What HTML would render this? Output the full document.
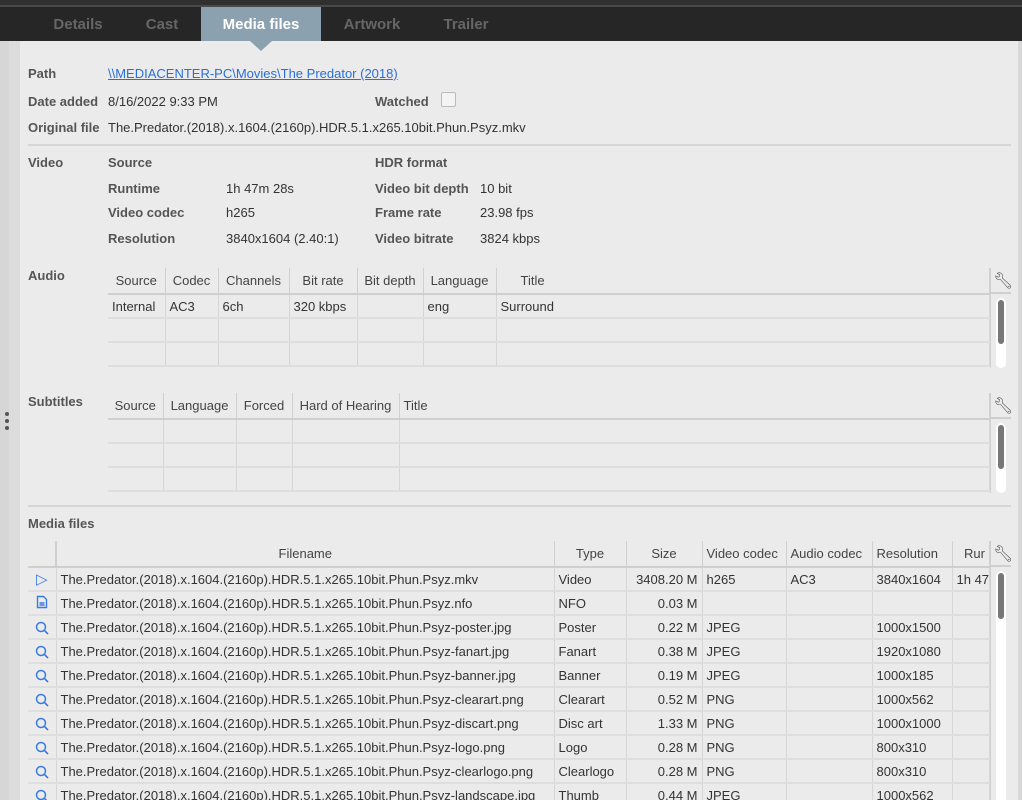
<!DOCTYPE html>
<html><head><meta charset="utf-8"><style>
*{margin:0;padding:0;box-sizing:border-box}
html{width:1022px;height:800px;overflow:hidden}
body{width:1022px;height:800px;overflow:hidden;background:#ebebeb;font-family:"Liberation Sans",Arial,sans-serif;font-size:13px;color:#333;position:relative}
.a{position:absolute;white-space:nowrap}
.lb{font-weight:bold;color:#555}
.top{position:absolute;left:0;top:0;width:1022px;height:41px;background:#262626}
.top:before{content:"";position:absolute;left:0;top:0;width:1022px;height:5px;background:#303030;border-bottom:2px solid #4a4a4a}
.tab{position:absolute;top:7px;height:34px;line-height:36px;font-size:15px;font-weight:bold;color:#666;text-align:center}
.sep{position:absolute;left:28px;width:983px;height:2px;background:#d6d6d6}
table{border-collapse:collapse;table-layout:fixed;position:absolute}
td,th{height:24px;border-right:1px solid #d6d6d6;border-bottom:2px solid #dedede;font-weight:normal;padding:0 4px;white-space:nowrap;overflow:hidden;color:#333}
th{border-bottom:2px solid #cfcfcf;border-right:1px solid #d0d0d0;height:26px;color:#444}
.sb{position:absolute;width:10px;background:#fff;border-radius:5px}
.sb div{background:#777;border-radius:4px;width:6px;margin:2px}
</style></head><body>
<div class="a" style="left:0;top:0;width:9px;height:800px;background:#d6d6d6"></div>
<div class="a" style="left:9px;top:0;width:11px;height:800px;background:#dcdcdc"></div>
<div class="a" style="left:5px;top:412px;width:4px;height:4px;border-radius:2px;background:#555;box-shadow:0 7px #555,0 14px #555"></div>
<div class="a" style="left:1018px;top:0;width:4px;height:800px;background:#d8d8d8"></div>
<div class="top"></div>
<div class="tab" style="left:38px;width:80px">Details</div>
<div class="tab" style="left:128px;width:68px">Cast</div>
<div class="tab" style="left:201px;width:120px;background:#8ca1af;color:#fff">Media files</div>
<div class="a" style="left:250px;top:41px;width:0;height:0;border-left:11px solid transparent;border-right:11px solid transparent;border-top:10px solid #8ca1af"></div>
<div class="tab" style="left:330px;width:84px">Artwork</div>
<div class="tab" style="left:430px;width:72px">Trailer</div>

<div class="a lb" style="left:28px;top:66px">Path</div>
<div class="a" style="left:108px;top:66px;color:#2a6fd6;text-decoration:underline">\\MEDIACENTER-PC\Movies\The Predator (2018)</div>
<div class="a lb" style="left:28px;top:94px">Date added</div>
<div class="a" style="left:108px;top:94px">8/16/2022 9:33 PM</div>
<div class="a lb" style="left:375px;top:94px">Watched</div>
<div class="a" style="left:441px;top:92px;width:15px;height:15px;border:1px solid #bbb;border-radius:2px;background:#f4f4f4"></div>
<div class="a lb" style="left:28px;top:120px">Original file</div>
<div class="a" style="left:108px;top:120px">The.Predator.(2018).x.1604.(2160p).HDR.5.1.x265.10bit.Phun.Psyz.mkv</div>
<div class="sep" style="top:144px"></div>

<div class="a lb" style="left:28px;top:155px">Video</div>
<div class="a lb" style="left:108px;top:155px">Source</div>
<div class="a lb" style="left:108px;top:181px">Runtime</div><div class="a" style="left:226px;top:181px">1h 47m 28s</div>
<div class="a lb" style="left:108px;top:205px">Video codec</div><div class="a" style="left:226px;top:205px">h265</div>
<div class="a lb" style="left:108px;top:231px">Resolution</div><div class="a" style="left:226px;top:231px">3840x1604 (2.40:1)</div>
<div class="a lb" style="left:375px;top:155px">HDR format</div>
<div class="a lb" style="left:375px;top:181px">Video bit depth</div><div class="a" style="left:480px;top:181px">10 bit</div>
<div class="a lb" style="left:375px;top:205px">Frame rate</div><div class="a" style="left:480px;top:205px">23.98 fps</div>
<div class="a lb" style="left:375px;top:231px">Video bitrate</div><div class="a" style="left:480px;top:231px">3824 kbps</div>

<div class="a lb" style="left:28px;top:268px">Audio</div>
<table style="left:108px;top:268px;width:882px">
<colgroup><col style="width:57px"><col style="width:53px"><col style="width:71px"><col style="width:68px"><col style="width:66px"><col style="width:73px"><col></colgroup>
<tr><th>Source</th><th>Codec</th><th>Channels</th><th>Bit rate</th><th>Bit depth</th><th>Language</th><th style="text-align:left;padding-left:24px">Title</th></tr>
<tr><td>Internal</td><td>AC3</td><td>6ch</td><td>320 kbps</td><td></td><td>eng</td><td>Surround</td></tr>
<tr><td></td><td></td><td></td><td></td><td></td><td></td><td></td></tr>
<tr><td></td><td></td><td></td><td></td><td></td><td></td><td></td></tr>
</table>
<div class="a" style="left:990px;top:268px;width:1px;height:100px;background:#d0d0d0"></div>
<div class="a" style="left:991px;top:292px;width:20px;height:2px;background:#cfcfcf"></div>
<div class="a" style="left:993px;top:271px;font-size:16px;color:#555">🔧︎</div>
<div class="sb" style="left:996px;top:298px;height:70px"><div style="height:44px"></div></div>

<div class="a lb" style="left:28px;top:394px">Subtitles</div>
<table style="left:108px;top:393px;width:882px">
<colgroup><col style="width:55px"><col style="width:73px"><col style="width:56px"><col style="width:107px"><col></colgroup>
<tr><th>Source</th><th>Language</th><th>Forced</th><th>Hard of Hearing</th><th style="text-align:left">Title</th></tr>
<tr><td></td><td></td><td></td><td></td><td></td></tr>
<tr><td></td><td></td><td></td><td></td><td></td></tr>
<tr><td></td><td></td><td></td><td></td><td></td></tr>
</table>
<div class="a" style="left:990px;top:393px;width:1px;height:100px;background:#d0d0d0"></div>
<div class="a" style="left:991px;top:417px;width:20px;height:2px;background:#cfcfcf"></div>
<div class="a" style="left:993px;top:396px;font-size:16px;color:#555">🔧︎</div>
<div class="sb" style="left:996px;top:423px;height:70px"><div style="height:44px"></div></div>

<div class="sep" style="top:505px"></div>
<div class="a lb" style="left:28px;top:516px">Media files</div>
<table style="left:28px;top:541px;width:962px">
<colgroup><col style="width:28px"><col style="width:498px"><col style="width:72px"><col style="width:76px"><col style="width:84px"><col style="width:86px"><col style="width:80px"><col></colgroup>
<tr><th style="border-right:2px solid #cfcfcf"></th><th>Filename</th><th>Type</th><th>Size</th><th style="text-align:left">Video codec</th><th style="text-align:left">Audio codec</th><th style="text-align:left">Resolution</th><th style="text-align:right">Rur</th></tr>
<tr><td style="color:#3a7be0;font-size:15px;text-align:center">▷</td><td>The.Predator.(2018).x.1604.(2160p).HDR.5.1.x265.10bit.Phun.Psyz.mkv</td><td>Video</td><td style="text-align:right">3408.20 M</td><td>h265</td><td>AC3</td><td>3840x1604</td><td>1h 47m</td></tr>
<tr><td style="text-align:center"><svg width="12" height="14"><path d="M1.5 1.5h6l3 3v8h-9z M3.5 8h5M3.5 10h5" fill="none" stroke="#3a7be0" stroke-width="1.4"/></svg></td><td>The.Predator.(2018).x.1604.(2160p).HDR.5.1.x265.10bit.Phun.Psyz.nfo</td><td>NFO</td><td style="text-align:right">0.03 M</td><td></td><td></td><td></td><td></td></tr>
<tr><td class="q"></td><td>The.Predator.(2018).x.1604.(2160p).HDR.5.1.x265.10bit.Phun.Psyz-poster.jpg</td><td>Poster</td><td style="text-align:right">0.22 M</td><td>JPEG</td><td></td><td>1000x1500</td><td></td></tr>
<tr><td class="q"></td><td>The.Predator.(2018).x.1604.(2160p).HDR.5.1.x265.10bit.Phun.Psyz-fanart.jpg</td><td>Fanart</td><td style="text-align:right">0.38 M</td><td>JPEG</td><td></td><td>1920x1080</td><td></td></tr>
<tr><td class="q"></td><td>The.Predator.(2018).x.1604.(2160p).HDR.5.1.x265.10bit.Phun.Psyz-banner.jpg</td><td>Banner</td><td style="text-align:right">0.19 M</td><td>JPEG</td><td></td><td>1000x185</td><td></td></tr>
<tr><td class="q"></td><td>The.Predator.(2018).x.1604.(2160p).HDR.5.1.x265.10bit.Phun.Psyz-clearart.png</td><td>Clearart</td><td style="text-align:right">0.52 M</td><td>PNG</td><td></td><td>1000x562</td><td></td></tr>
<tr><td class="q"></td><td>The.Predator.(2018).x.1604.(2160p).HDR.5.1.x265.10bit.Phun.Psyz-discart.png</td><td>Disc art</td><td style="text-align:right">1.33 M</td><td>PNG</td><td></td><td>1000x1000</td><td></td></tr>
<tr><td class="q"></td><td>The.Predator.(2018).x.1604.(2160p).HDR.5.1.x265.10bit.Phun.Psyz-logo.png</td><td>Logo</td><td style="text-align:right">0.28 M</td><td>PNG</td><td></td><td>800x310</td><td></td></tr>
<tr><td class="q"></td><td>The.Predator.(2018).x.1604.(2160p).HDR.5.1.x265.10bit.Phun.Psyz-clearlogo.png</td><td>Clearlogo</td><td style="text-align:right">0.28 M</td><td>PNG</td><td></td><td>800x310</td><td></td></tr>
<tr><td class="q"></td><td>The.Predator.(2018).x.1604.(2160p).HDR.5.1.x265.10bit.Phun.Psyz-landscape.jpg</td><td>Thumb</td><td style="text-align:right">0.44 M</td><td>JPEG</td><td></td><td>1000x562</td><td></td></tr>
</table>
<div class="a" style="left:990px;top:541px;width:1px;height:260px;background:#d0d0d0"></div>
<div class="a" style="left:991px;top:565px;width:20px;height:2px;background:#cfcfcf"></div>
<div class="a" style="left:993px;top:544px;font-size:16px;color:#555">🔧︎</div>
<div class="sb" style="left:996px;top:571px;height:240px"><div style="height:46px"></div></div>
<script>
document.querySelectorAll('td.q').forEach(function(t){t.style.textAlign='center';t.innerHTML='<svg width="14" height="14" style="vertical-align:middle"><circle cx="6" cy="6" r="4.5" fill="none" stroke="#3a7be0" stroke-width="1.5"/><path d="M9.3 9.3L13 13" stroke="#3a7be0" stroke-width="1.6"/></svg>';});
</script>
</body></html>
